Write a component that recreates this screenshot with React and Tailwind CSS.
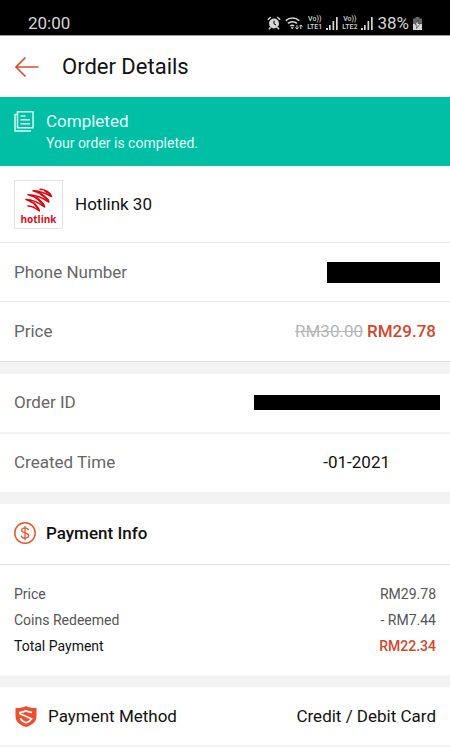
import React from "react";

function AlarmIcon() {
  return (
    <svg viewBox="0 0 14 14" className="h-[14px] w-[14px]" aria-hidden="true">
      <circle cx="7" cy="7.5" r="5" fill="#d6d6d6" />
      <path d="M.8 3.8 3.8 1M13.2 3.8 10.2 1M3.6 11.2l-1.6 2M10.4 11.2l1.6 2" stroke="#d6d6d6" strokeWidth="1.5" />
      <path d="M7 4.6v3.2l2 1.2" fill="none" stroke="#000" strokeWidth="1" />
    </svg>
  );
}

function WifiIcon() {
  return (
    <svg viewBox="0 0 18 14" className="h-[14px] w-[18px]" fill="none" stroke="#d6d6d6" aria-hidden="true">
      <path d="M.8 4.6a9.8 9.8 0 0 1 13.4 0M3 7.4a6.6 6.6 0 0 1 9 0M5.2 10a3.4 3.4 0 0 1 4 0" strokeWidth="1.5" />
      <path d="m7.2 13.2-1.6-2h3.2z" fill="#d6d6d6" stroke="none" />
      <path d="M12 9v4M10.4 11.4l1.6 1.7 1.6-1.7M15.8 13V9M14.2 10.6l1.6-1.7 1.6 1.7" strokeWidth="1" />
    </svg>
  );
}

function SignalIcon() {
  return (
    <svg viewBox="0 0 12 13" className="h-[13px] w-[12px]" fill="#d6d6d6" aria-hidden="true">
      <path d="M0 11h2v2H0zM3 8h1.7v5H3zM6.500 4h1.700v9H6.500zM10 0h1.700v13H10z" />
    </svg>
  );
}

function BatteryIcon() {
  return (
    <svg viewBox="0 0 9 13" className="h-[13px] w-[9px]" aria-hidden="true">
      <path d="M2.500 0h4v1.500H9V13H0V1.500h2.500z" fill="#666" />
      <path d="M0 7h9v6H0z" fill="#d6d6d6" />
      <path d="M5.500 3 2 7.800h2.200l-.7 3.700L7.200 6.500H4.900z" fill="#fff" stroke="#222" strokeWidth=".6" />
    </svg>
  );
}

function Volte({ sim }) {
  return (
    <span className="flex flex-col text-center text-[7px] leading-[8px] font-medium">
      <span>Vo))</span>
      <span>LTE{sim}</span>
    </span>
  );
}

function HotlinkLogo() {
  return (
    <svg viewBox="0 0 28 25" className="h-[25px] w-[28px]" fill="none" stroke="#e2070f" strokeLinecap="round" strokeLinejoin="round" aria-hidden="true">
      <path
        d="M15 1.2C20 1.5 25.5 4 26.5 8.5C20 5 14 2.8 8 2.8C14 4.500 22 9 24 14C17 9.500 10 6.800 3 6.800C10 8.500 18 13.500 19.500 19C13 14 7 11.500 1 11.500C6 13 13 17.500 14.500 23C10 19.500 6 18 3 18"
        strokeWidth="1.5"
      />
      <path d="M20 2.800 25.500 7M16 6 23 12M12 10 18.700 17M9 15 13.700 21.500" strokeWidth="2" />
    </svg>
  );
}

function OrderIcon() {
  return (
    <svg viewBox="0 0 20 21" className="h-[21px] w-[20px]" fill="none" stroke="#d5fff6" strokeWidth="1.5" aria-hidden="true">
      <path d="M3.5.8h15.6v16H3.5zM3.5 3.5H1v16.6h16" />
      <path d="M6.5 5h5M6.5 8.8h9.5M6.5 12.8h9.5" />
    </svg>
  );
}

function CoinIcon() {
  return (
    <svg viewBox="0 0 22 22" className="h-[22px] w-[22px]" fill="none" stroke="#e4572e" aria-hidden="true">
      <circle cx="11" cy="11" r="10.2" strokeWidth="1.5" />
      <path d="M14.4 8.2C14.2 6.7 12.9 5.9 11 5.9c-2 0-3.4.9-3.4 2.4 0 3.4 7 1.7 7 5.3 0 1.6-1.5 2.5-3.6 2.5s-3.5-.9-3.7-2.5M11 4v14" strokeWidth="1.3" />
    </svg>
  );
}

function ShieldIcon() {
  return (
    <svg viewBox="0 0 22 21" className="h-[21px] w-[22px]" aria-hidden="true">
      <path d="M11 0c3 1.7 6.500 2.200 10.500 2v8.500c0 5-4 8.500-10.500 10.500C4.500 19 .5 15.500.5 10.500V2C4.500 2.200 8 1.700 11 0z" fill="#ea4f30" />
      <path d="M17 6.500C14.500 6.300 12.500 5.700 11 4.800 9.500 5.700 7.500 6.300 5 6.500v1.300l11.500 5c-1 1.800-3 3-5.500 4-2.800-1-4.800-2.500-5.600-4.500" fill="none" stroke="#fff" strokeWidth="1.700" />
    </svg>
  );
}

function Row({ label, className = "", children }) {
  return (
    <div className={`flex items-center justify-between pl-[14px] ${className}`}>
      <dt className="text-[#666]">{label}</dt>
      <dd>{children}</dd>
    </div>
  );
}

function App() {
  return (
    <div className="min-h-screen bg-[#f3f3f3] font-['Roboto',sans-serif] text-[17px] leading-6 text-[#111]">
      <div className="flex h-9 items-end justify-between border-b border-[#999] bg-black pr-7 pl-7 text-[#d6d6d6]">
        <span>20:00</span>
        <div className="flex items-center gap-1">
          <AlarmIcon />
          <WifiIcon />
          <Volte sim="1" />
          <SignalIcon />
          <Volte sim="2" />
          <SignalIcon />
          <span>38%</span>
          <BatteryIcon />
        </div>
      </div>

      <header className="flex h-[61px] items-center gap-[23px] bg-white pl-[15px]">
        <button type="button" aria-label="Back">
          <svg viewBox="0 0 24 20" className="h-5 w-6" fill="none" stroke="#d4512f" strokeWidth="1.6" aria-hidden="true">
            <path d="M10.5.5 1 10l9.5 9.5M1 10h22.5" />
          </svg>
        </button>
        <h1 className="text-[22px]">Order Details</h1>
      </header>

      <main>
        <section className="flex h-[69px] gap-3 bg-[#00bfa5] pt-3 pl-[14px] text-[#e5fffa]">
          <div className="pt-[2px]">
            <OrderIcon />
          </div>
          <div>
            <h2>Completed</h2>
            <p className="text-[14px] leading-5">Your order is completed.</p>
          </div>
        </section>

        <section className="bg-white">
          <div className="flex h-[77px] items-center gap-3 border-b border-[#ebebeb] pl-[14px]">
            <div className="flex h-[49px] w-[49px] flex-col items-center justify-center border border-[#e5e5e5] pt-1">
              <HotlinkLogo />
              <span className="font-['Open_Sans',sans-serif] text-[10px] leading-[12px] font-bold text-[#d90f1c]">hotlink</span>
            </div>
            <h2>Hotlink 30</h2>
          </div>
          <dl>
            <Row label="Phone Number" className="h-[59px] border-b border-[#ebebeb] pr-[10px]">
              <span className="block h-[21px] w-[113px] bg-black" />
            </Row>
            <Row label="Price" className="h-[60px] border-b border-[#ddd] pr-[14px] pb-[2px]">
              <span className="flex gap-1">
                <s className="text-[#b5b5b5]">RM30.00</s>
                <span className="font-medium text-[#d0482b]">RM29.78</span>
              </span>
            </Row>
          </dl>
        </section>

        <dl className="mt-3 bg-white">
          <Row label="Order ID" className="h-[60px] border-b-2 border-[#f3f3f3] pr-[10px] pb-[2px]">
            <span className="block h-[15px] w-[186px] bg-black" />
          </Row>
          <Row label="Created Time" className="h-[58px] pr-[60px] pb-[2px]">
            -01-2021
          </Row>
        </dl>

        <section className="mt-3 bg-white">
          <div className="flex h-[61px] items-center gap-[10px] border-b border-[#e2e2e2] pb-[2px] pl-[14px]">
            <CoinIcon />
            <h2 className="font-medium">Payment Info</h2>
          </div>
          <dl className="flex flex-col gap-[2px] py-[17px] pr-[14px] text-[14px]">
            <Row label={<span className="text-[#555]">Price</span>}>
              <span className="text-[#555]">RM29.78</span>
            </Row>
            <Row label={<span className="text-[#555]">Coins Redeemed</span>}>
              <span className="text-[#555]">- RM7.44</span>
            </Row>
            <Row label={<span className="text-[#111]">Total Payment</span>}>
              <span className="font-medium text-[#d0482b]">RM22.34</span>
            </Row>
          </dl>
        </section>

        <section className="mt-3 flex h-[58px] items-center justify-between bg-white pr-[14px] pl-[15px]">
          <h2 className="flex items-center gap-[11px]">
            <ShieldIcon />
            Payment Method
          </h2>
          <span>Credit / Debit Card</span>
        </section>
      </main>
    </div>
  );
}

export default App;
